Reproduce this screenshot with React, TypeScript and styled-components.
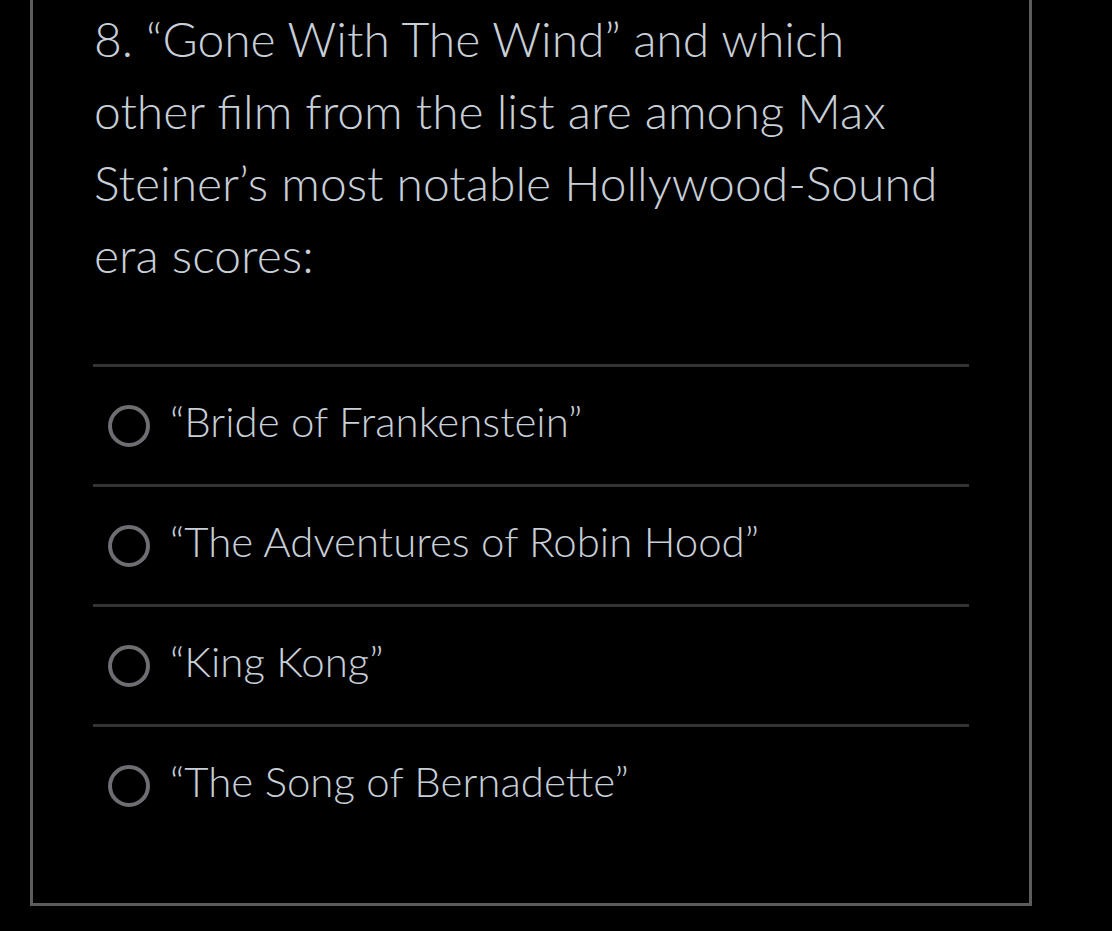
import React from 'react';
import styled, { createGlobalStyle } from 'styled-components';

const GlobalStyle = createGlobalStyle`
    html, body {
        margin: 0;
        padding: 0;
        background: #000;
    }
    body {
        font-family: Lato, "Noto Sans", sans-serif;
    }
`;

const options = [
    '“Bride of Frankenstein”',
    '“The Adventures of Robin Hood”',
    '“King Kong”',
    '“The Song of Bernadette”',
];

const App: React.FC = () => {
    return (
        <>
            <GlobalStyle />
            <Page>
                <QuestionCard>
                    <Question>
                        8. “Gone With The Wind” and which other film from the list are among Max Steiner’s most notable Hollywood-Sound era scores:
                    </Question>
                    <OptionList>
                        {options.map((label) => (
                            <OptionRow key={label}>
                                <Radio />
                                <OptionLabel>{label}</OptionLabel>
                            </OptionRow>
                        ))}
                    </OptionList>
                </QuestionCard>
            </Page>
        </>
    );
};

export default App;

const Page = styled.div`
    background: #000;
    min-height: 931px;
    padding: 0 80px 0 30px;
    overflow: hidden;
`;

const QuestionCard = styled.div`
    width: 1002px;
    box-sizing: border-box;
    border: 3px solid #5c5c5c;
    border-top: none;
    padding: 3px 60px 59px 60px;
`;

const Question = styled.h2`
    margin: 0;
    padding-left: 1px;
    max-width: 860px;
    font-family: "Lato Light", Lato, "Noto Sans", sans-serif;
    font-weight: 300;
    font-size: 48px;
    line-height: 72px;
    color: #c7cfd8;
`;

const OptionList = styled.div`
    margin-top: 73px;
    display: flex;
    flex-direction: column;
`;

const OptionRow = styled.label`
    display: flex;
    align-items: center;
    gap: 20px;
    height: 117px;
    padding-left: 15px;
    border-top: 3px solid #333;
`;

const Radio = styled.span`
    flex: none;
    width: 42px;
    height: 42px;
    box-sizing: border-box;
    border: 4px solid #6e6e72;
    border-radius: 50%;
`;

const OptionLabel = styled.span`
    font-family: "Lato Light", Lato, "Noto Sans", sans-serif;
    font-weight: 300;
    font-size: 42px;
    line-height: 50px;
    padding-bottom: 10px;
    color: #c7cfd8;
`;
